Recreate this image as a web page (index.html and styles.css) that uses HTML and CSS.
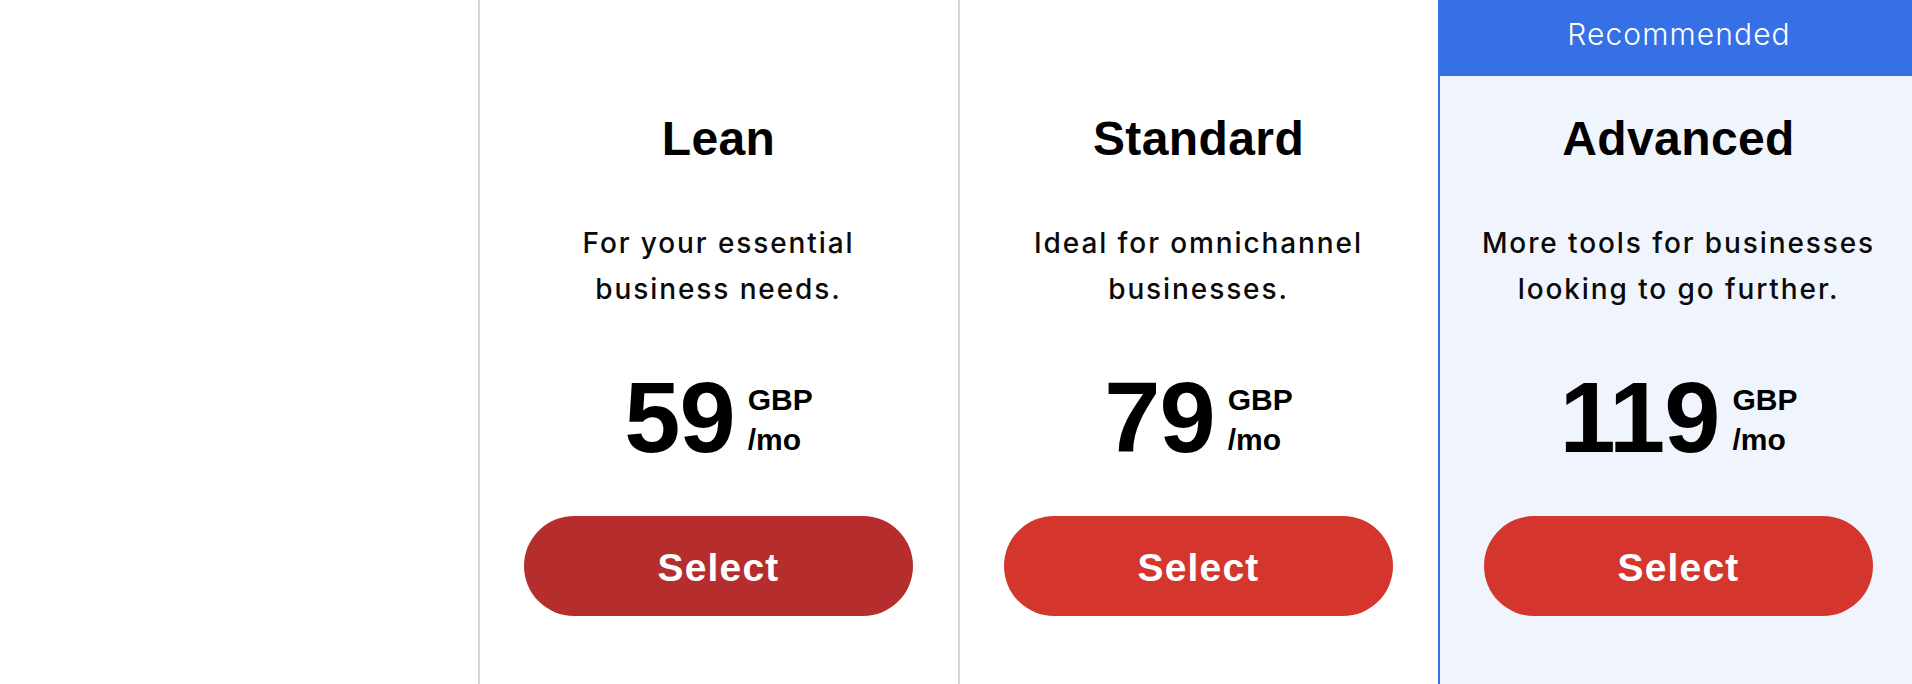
FILE: index.html
```html
<!DOCTYPE html>
<html lang="en">
<head>
<meta charset="utf-8">
<title>Plans</title>
<link rel="stylesheet" href="styles.css">
</head>
<body>
<div class="plans">
  <div class="col col-empty"></div>

  <div class="col plan">
    <div class="badge-slot"></div>
    <h2 class="plan-name">Lean</h2>
    <p class="plan-desc">For your essential<br>business needs.</p>
    <div class="price">
      <span class="amount">59</span>
      <span class="unit"><span>GBP</span><span>/mo</span></span>
    </div>
    <button class="select select-hover">Select</button>
  </div>

  <div class="col plan">
    <div class="badge-slot"></div>
    <h2 class="plan-name">Standard</h2>
    <p class="plan-desc">Ideal for omnichannel<br>businesses.</p>
    <div class="price">
      <span class="amount">79</span>
      <span class="unit"><span>GBP</span><span>/mo</span></span>
    </div>
    <button class="select">Select</button>
  </div>

  <div class="col plan plan-featured">
    <div class="badge-slot badge">Recommended</div>
    <h2 class="plan-name">Advanced</h2>
    <p class="plan-desc">More tools for businesses<br>looking to go further.</p>
    <div class="price">
      <span class="amount">119</span>
      <span class="unit"><span>GBP</span><span>/mo</span></span>
    </div>
    <button class="select">Select</button>
  </div>
</div>
</body>
</html>
```

FILE: styles.css
```css
html, body {
  margin: 0;
  padding: 0;
  background: #ffffff;
  overflow: hidden;
}

body {
  font-family: "Liberation Sans", Arial, sans-serif;
  color: #000000;
}

.plans {
  display: grid;
  grid-template-columns: 478px repeat(3, 480px);
  min-height: 684px;
  width: 1918px;
}

.col {
  min-height: 684px;
}

.plan {
  display: flex;
  flex-direction: column;
  align-items: stretch;
  border-left: 2px solid #dad6d8;
  padding: 0 45px 0 44px;
  text-align: center;
}

.plan-featured {
  border-left-color: #3570e6;
  background: #f0f5fd;
}

.badge-slot {
  height: 76px;
  margin: 0 -45px 0 -44px;
  flex: none;
}

.badge {
  background: #3570e6;
  color: #ffffff;
  font-family: "Inter", "Liberation Sans", sans-serif;
  font-weight: 300;
  font-size: 30px;
  letter-spacing: 1.1px;
  display: flex;
  align-items: center;
  justify-content: center;
  padding-bottom: 8px;
  box-sizing: border-box;
}

.plan-name {
  margin: 35px 0 0;
  font-size: 48px;
  line-height: 56px;
  font-weight: 700;
  letter-spacing: 0.4px;
}

.plan-desc {
  margin: 53px -24px 0;
  font-family: "Inter", "Liberation Sans", sans-serif;
  font-size: 28px;
  line-height: 46px;
  font-weight: 500;
  letter-spacing: 1.9px;
  color: #0a0a0a;
}

.price {
  margin-top: 55px;
  display: flex;
  justify-content: center;
  align-items: flex-start;
  gap: 13px;
}

.amount {
  font-size: 101px;
  line-height: 100px;
  font-weight: 700;
  letter-spacing: -1px;
}

.unit {
  display: flex;
  flex-direction: column;
  align-items: flex-start;
  padding-top: 13px;
  font-size: 30px;
  line-height: 40px;
  font-weight: 700;
}

.select {
  margin-top: 49px;
  height: 100px;
  width: 100%;
  border: none;
  border-radius: 50px;
  background: #d4352d;
  color: #ffffff;
  font-family: "Liberation Sans", Arial, sans-serif;
  font-size: 39px;
  font-weight: 700;
  letter-spacing: 1.2px;
  cursor: pointer;
  padding: 4px 0 0;
}

.select-hover {
  background: #b52d2d;
}
```
